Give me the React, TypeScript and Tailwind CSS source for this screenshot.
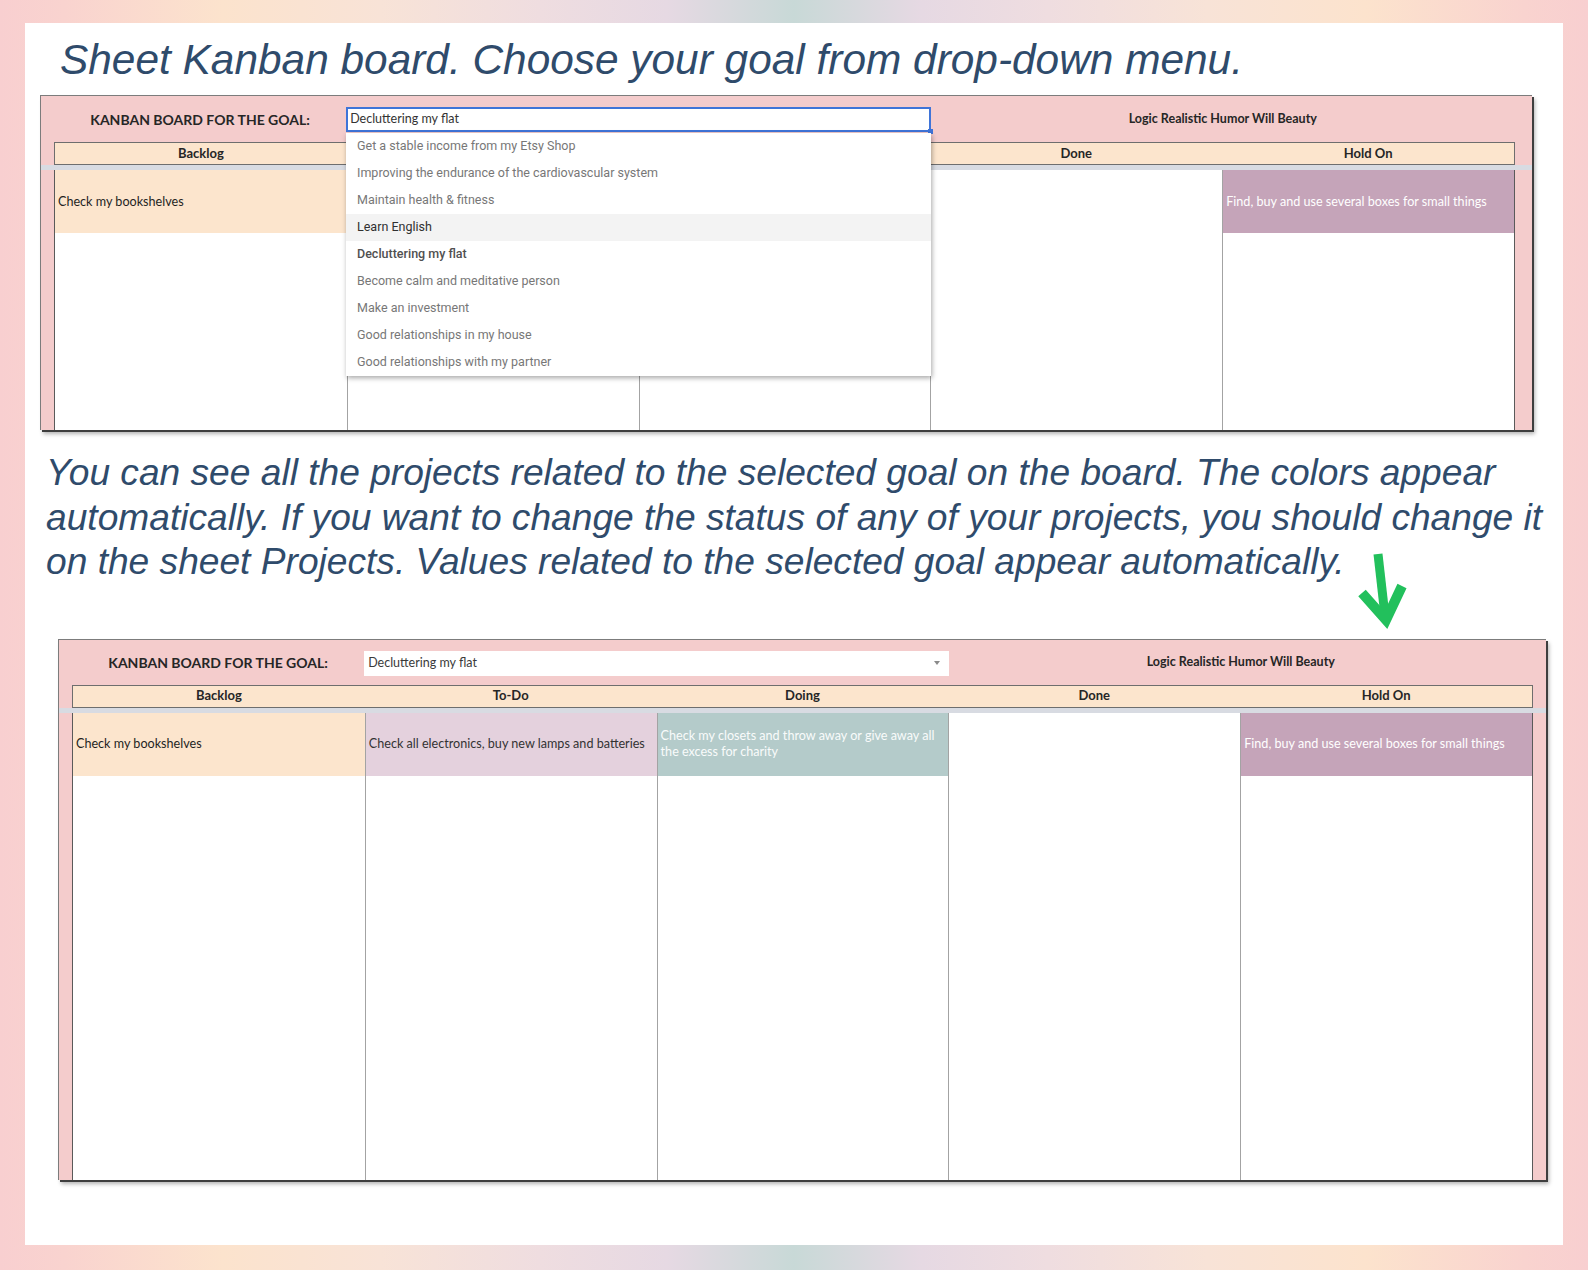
import clsx from "clsx";
import type { ReactNode } from "react";

const columns = ["Backlog", "To-Do", "Doing", "Done", "Hold On"];

type Card = { text: ReactNode; bg: string; fg: string } | null;

const cards: Card[] = [
  { text: "Check my bookshelves", bg: "bg-[#fce5cd]", fg: "text-[#1f1f1f]" },
  {
    text: "Check all electronics, buy new lamps and batteries",
    bg: "bg-[#e4d1dd]",
    fg: "text-[#333333]",
  },
  {
    text: (
      <>
        Check my closets and throw away or give away all
        <br />
        the excess for charity
      </>
    ),
    bg: "bg-[#b4cbca]",
    fg: "text-[#f9fbfb]",
  },
  null,
  {
    text: "Find, buy and use several boxes for small things",
    bg: "bg-[#c5a4b9]",
    fg: "text-white",
  },
];

const goals = [
  "Get a stable income from my Etsy Shop",
  "Improving the endurance of the cardiovascular system",
  "Maintain health & fitness",
  "Learn English",
  "Decluttering my flat",
  "Become calm and meditative person",
  "Make an investment",
  "Good relationships in my house",
  "Good relationships with my partner",
];

interface BoardProps {
  open?: boolean;
  className: string;
  padRight: string;
  topRow: string;
}

function Board({ open, className, padRight, topRow }: BoardProps) {
  // columns 2 and 3 sit under the open drop-down menu
  const isCovered = (i: number) => open && (i === 1 || i === 2);

  return (
    <div
      className={clsx(
        "relative flex flex-col bg-[#f4cccc] border-t border-l border-[#7c7c7c] font-[Lato] text-[#262626]",
        "shadow-[2px_2px_0_#3e3e3e,3px_4px_4px_rgba(0,0,0,0.3)]",
        className
      )}
    >
      {/* Goal row */}
      <div className={clsx("grid grid-cols-5 pl-[13px]", padRight, topRow)}>
        <div className="flex items-center justify-center text-[14px] font-bold">
          KANBAN BOARD FOR THE GOAL:
        </div>
        {open ? (
          <div className="relative col-span-2 mt-[11px] h-[25px] border-2 border-[#3f74d8] bg-white pl-[2px] text-[12.5px] leading-[20px] text-[#333333]">
            Decluttering my flat
            <span className="absolute -bottom-[4px] -right-[4px] h-[5px] w-[5px] bg-[#3f74d8]" />
          </div>
        ) : (
          <div className="col-span-2 mt-[11px] flex h-[25px] items-center justify-between bg-white pl-[4px] pr-[9px] text-[12.5px] text-[#3a3a3a]">
            Decluttering my flat
            <span className="h-0 w-0 border-x-[3.5px] border-t-[4px] border-x-transparent border-t-[#8a8a8a]" />
          </div>
        )}
        <div className="col-span-2 flex items-center justify-center text-[12.5px] font-bold">
          Logic Realistic Humor Will Beauty
        </div>
      </div>

      {/* Column headers */}
      <div className={clsx("pl-[13px]", padRight)}>
        <div className="grid h-[23px] grid-cols-5 border border-[#6e6e6e] bg-[#fce5cd] text-[13px] font-bold">
          {columns.map((c, i) => (
            <div key={c} className="flex items-center justify-center">
              {!isCovered(i) && c}
            </div>
          ))}
        </div>
      </div>
      <div className="h-[5px] bg-[#d8dbe2]" />

      {/* Cards */}
      <div className={clsx("flex flex-1 pl-[13px]", padRight)}>
        <div className="grid flex-1 grid-cols-5 border-l border-r border-[#5a5a5a] bg-white">
          {cards.map((card, i) => (
            <div key={i} className={clsx(i > 0 && "border-l border-[#a3a3a3]")}>
              {card && (
                <div
                  className={clsx(
                    "flex h-[63px] items-center whitespace-nowrap px-[3px] text-[12.6px] leading-[16px]",
                    card.bg,
                    card.fg
                  )}
                >
                  {!isCovered(i) && <span>{card.text}</span>}
                </div>
              )}
            </div>
          ))}
        </div>
      </div>

      {open && (
        <div className="absolute left-[305px] top-[37px] z-10 w-[585px] bg-white font-[Roboto] text-[12.5px] text-[#777777] shadow-[1px_2px_5px_rgba(0,0,0,0.35)]">
          {goals.map((g) => (
            <div
              key={g}
              className={clsx(
                "flex h-[27px] items-center pl-[11px]",
                g === "Learn English" && "bg-[#f3f3f3] text-[#303030]",
                g === "Decluttering my flat" && "font-medium text-[#505050]"
              )}
            >
              {g}
            </div>
          ))}
        </div>
      )}
    </div>
  );
}

export default function App() {
  return (
    <div className="h-[1270px] w-[1588px] bg-[linear-gradient(90deg,#f8cfd0_0%,#f9d3cf_4%,#fce3cd_14%,#f8e3d7_24%,#efdde0_34%,#e6d9e3_42%,#c8d9d7_50%,#e6d9e3_58%,#efdde0_66%,#f8e3d7_76%,#fce3cd_86%,#f9d3cf_96%,#f8cfd0_100%)] px-[25px] pb-[25px] pt-[23px]">
      <div className="relative flex h-[1222px] flex-col bg-white font-['Liberation_Sans',Arial,sans-serif] italic text-[#2f4b6b]">
        <h1 className="ml-[35px] mt-[16px] whitespace-nowrap text-[42.4px] font-normal leading-[42px]">
          Sheet Kanban board. Choose your goal from drop-down menu.
        </h1>

        <Board
          open
          className="ml-[15px] mt-[14px] h-[335px] w-[1492px] not-italic"
          padRight="pr-[17px]"
          topRow="h-[46px]"
        />

        <p className="ml-[21px] mt-[20px] whitespace-nowrap text-[37.15px] leading-[44.5px]">
          You can see all the projects related to the selected goal on the board. The colors appear
          <br />
          automatically. If you want to change the status of any of your projects, you should change it
          <br />
          on the sheet Projects. Values related to the selected goal appear automatically.
        </p>

        <svg
          className="absolute left-[1331px] top-[529px]"
          width="52"
          height="82"
          viewBox="0 0 52 82"
          fill="none"
          stroke="#22c05c"
        >
          <line x1="22" y1="2" x2="29" y2="64" strokeWidth="9" />
          <polyline points="6,41 30,68 46,34" strokeWidth="10" strokeLinejoin="miter" />
        </svg>

        <Board
          className="ml-[33px] mt-[55px] h-[541px] w-[1488px] not-italic"
          padRight="pr-[13px]"
          topRow="h-[45px]"
        />
      </div>
    </div>
  );
}
